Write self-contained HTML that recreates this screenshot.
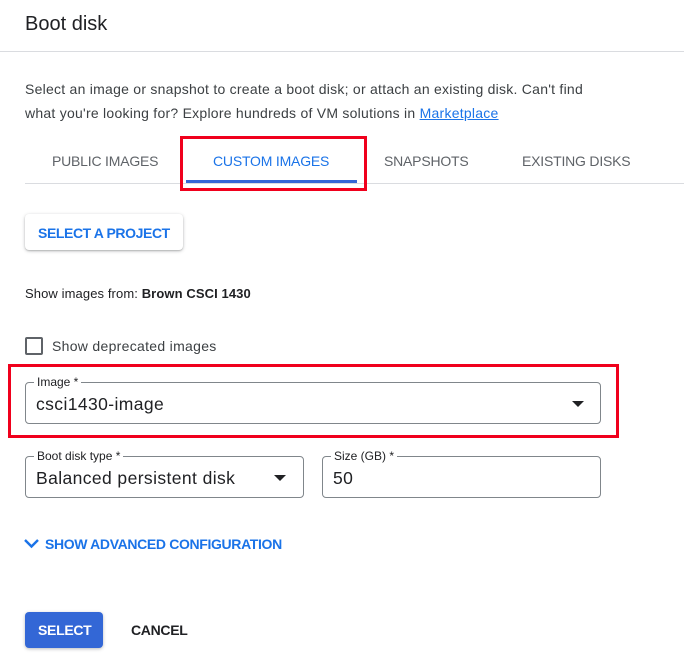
<!DOCTYPE html>
<html><head><style>
*{margin:0;padding:0;box-sizing:border-box}
body{width:684px;height:667px;background:#fff;font-family:"Liberation Sans",Arial,sans-serif;position:relative;overflow:hidden;color:#202124}
.a{position:absolute;white-space:nowrap}
.tab{font-size:14px;color:#5f6368;letter-spacing:-0.2px}
.fld{position:absolute;border:1px solid #80868b;border-radius:4px}
.lbl{position:absolute;top:-8px;left:8px;background:#fff;padding:0 3px;font-size:12px;color:#202124}
.val{position:absolute;left:10px;font-size:17.5px;color:#202124;letter-spacing:0.4px}
.tri{position:absolute;width:0;height:0;border-left:6px solid transparent;border-right:6px solid transparent;border-top:6px solid #202124}
</style></head><body>
<div class="a" style="left:25px;top:13px;font-size:20px;color:#202124">Boot disk</div>
<div class="a" style="left:0;top:51px;width:684px;height:1px;background:#dadce0"></div>
<div class="a" style="left:25px;top:77px;font-size:14px;color:#3c4043;letter-spacing:0.25px;line-height:24px">Select an image or snapshot to create a boot disk; or attach an existing disk. Can't find<br>what you're looking for? Explore hundreds of VM solutions in <span style="color:#1a73e8;text-decoration:underline">Marketplace</span></div>

<div class="a tab" style="left:52px;top:153px">PUBLIC IMAGES</div>
<div class="a tab" style="left:213px;top:153px;color:#1a73e8">CUSTOM IMAGES</div>
<div class="a tab" style="left:384px;top:153px">SNAPSHOTS</div>
<div class="a tab" style="left:522px;top:153px">EXISTING DISKS</div>
<div class="a" style="left:25px;top:183px;width:659px;height:1px;background:#dadce0"></div>
<div class="a" style="left:186px;top:180px;width:171px;height:3px;background:#3367d6"></div>
<div class="a" style="left:180px;top:136px;width:187px;height:55px;border:3px solid #f0001c"></div>

<div class="a" style="left:25px;top:214px;width:158px;height:36px;border-radius:4px;box-shadow:0 1px 3px rgba(60,64,67,.35),0 1px 1px rgba(60,64,67,.15);background:#fff"></div>
<div class="a" style="left:38px;top:225px;font-size:14px;font-weight:bold;color:#1a73e8;letter-spacing:-0.4px">SELECT A PROJECT</div>

<div class="a" style="left:25px;top:286px;font-size:13px;color:#202124;letter-spacing:0.1px">Show images from: <b>Brown CSCI 1430</b></div>

<div class="a" style="left:25px;top:337px;width:18px;height:18px;border:2px solid #5f6368;border-radius:2px"></div>
<div class="a" style="left:52px;top:338px;font-size:14px;color:#3c4043;letter-spacing:0.3px">Show deprecated images</div>

<div class="a" style="left:8px;top:364px;width:611px;height:74px;border:3px solid #f0001c"></div>
<div class="fld" style="left:25px;top:382px;width:576px;height:42px">
<div class="lbl">Image *</div>
<div class="val" style="top:11px">csci1430-image</div>
<div class="tri" style="left:546px;top:18px"></div>
</div>

<div class="fld" style="left:25px;top:456px;width:279px;height:42px">
<div class="lbl">Boot disk type *</div>
<div class="val" style="top:11px">Balanced persistent disk</div>
<div class="tri" style="left:248px;top:18px"></div>
</div>
<div class="fld" style="left:322px;top:456px;width:279px;height:42px">
<div class="lbl">Size (GB) *</div>
<div class="val" style="top:11px">50</div>
</div>

<svg class="a" style="left:23px;top:537px" width="18" height="14" viewBox="0 0 18 14"><path d="M2 3 L8.5 9.5 L15 3" stroke="#1a73e8" stroke-width="2.4" fill="none"/></svg>
<div class="a" style="left:45px;top:536px;font-size:14px;font-weight:bold;color:#1a73e8;letter-spacing:-0.35px">SHOW ADVANCED CONFIGURATION</div>

<div class="a" style="left:25px;top:612px;width:78px;height:36px;border-radius:4px;background:#3367d6;box-shadow:0 1px 3px rgba(60,64,67,.35)"></div>
<div class="a" style="left:38px;top:622px;font-size:14px;font-weight:bold;color:#fff;letter-spacing:-0.3px">SELECT</div>
<div class="a" style="left:131px;top:622px;font-size:14px;font-weight:bold;color:#202124;letter-spacing:-0.3px">CANCEL</div>
</body></html>
